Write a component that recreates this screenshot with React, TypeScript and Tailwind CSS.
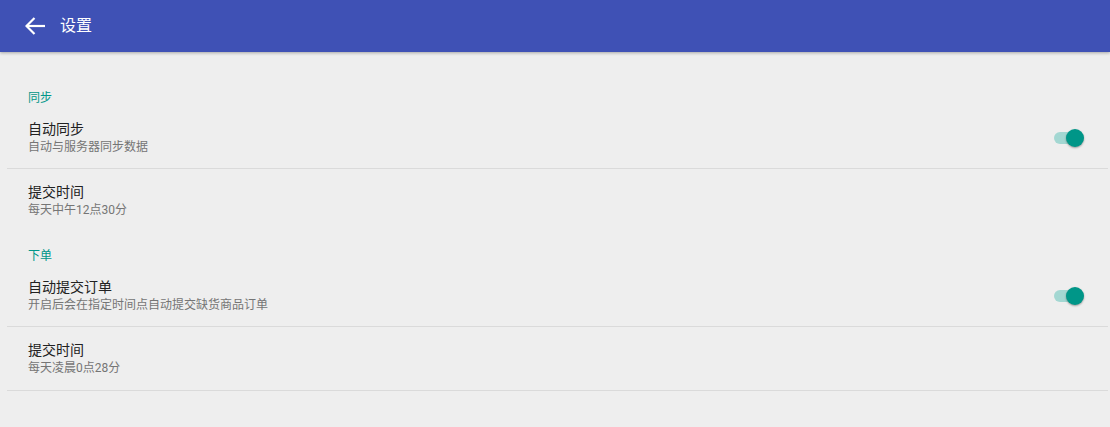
import React from "react";

function Toggle() {
  return (
    <div className="relative w-[30px] h-[18px]">
      <div className="absolute left-0 top-[3px] w-[28px] h-[12px] rounded-full bg-[#A3D7D2]" />
      <div className="absolute right-0 top-0 w-[18px] h-[18px] rounded-full bg-[#009688] shadow-[0_1px_2px_rgba(0,0,0,0.35)]" />
    </div>
  );
}

function SectionHeader({ text }: { text: string }) {
  return (
    <div className="h-[32px] flex items-end pl-[21px] pb-[2px]">
      <span className="text-[12px] leading-[12px] text-[#009688]">{text}</span>
    </div>
  );
}

function Row({ title, sub, toggle, divider = true, tall = false }: { title: string; sub: string; toggle?: boolean; divider?: boolean; tall?: boolean }) {
  return (
    <div className={`${tall ? "h-[64px]" : "h-[63px]"} flex items-center pl-[21px] pr-[24px] ${divider ? "border-b border-[#DADADA]" : ""}`}>
      <div className="flex-1 self-start pt-[15px] flex flex-col">
        <span className="text-[14px] leading-[16px] text-[#212121]">{title}</span>
        <span className="mt-[2px] text-[12px] leading-[16px] text-[#757575]">{sub}</span>
      </div>
      {toggle && (
        <div className="mt-[2px]">
          <Toggle />
        </div>
      )}
    </div>
  );
}

export default function App() {
  return (
    <div
      className="w-[1110px] h-[427px] bg-[#EEEEEE] overflow-hidden"
      style={{ fontFamily: "Roboto, 'Noto Sans CJK SC', sans-serif" }}
    >
      <div className="h-[52px] bg-[#3F51B5] flex items-center pl-[25px] shadow-[0_1px_3px_rgba(0,0,0,0.3)] relative z-10">
        <svg width="20" height="18" viewBox="0 0 20 18" fill="none">
          <path d="M1.5 9H20" stroke="white" strokeWidth="2.2" />
          <path d="M9.5 1L1.5 9L9.5 17" stroke="white" strokeWidth="2.2" />
        </svg>
        <span className="ml-[15px] text-[16px] leading-[20px] text-white">设置</span>
      </div>
      <div className="pt-[22px] pl-[7px] pr-[2px]">
        <SectionHeader text="同步" />
        <Row title="自动同步" sub="自动与服务器同步数据" toggle />
        <Row title="提交时间" sub="每天中午12点30分" divider={false} />
        <SectionHeader text="下单" />
        <Row title="自动提交订单" sub="开启后会在指定时间点自动提交缺货商品订单" toggle />
        <Row title="提交时间" sub="每天凌晨0点28分" tall />
      </div>
    </div>
  );
}
